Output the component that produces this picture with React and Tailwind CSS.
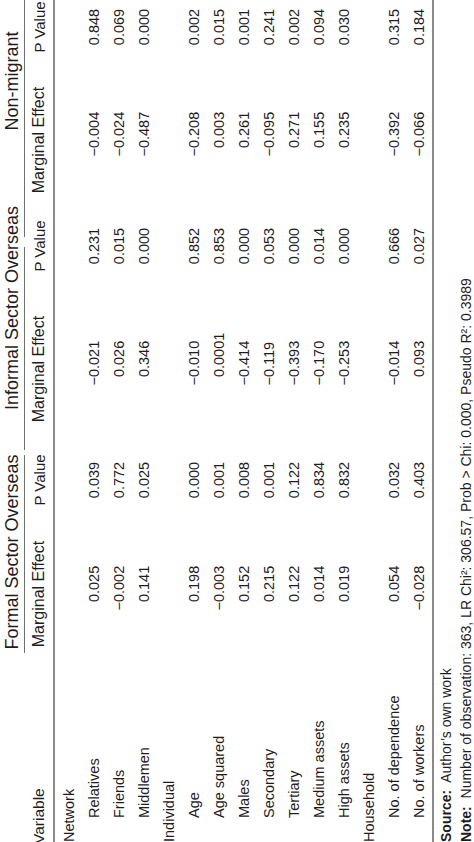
const rows = [
  { label: "Network", group: true },
  { label: "Relatives", v: ["0.025", "0.039", "−0.021", "0.231", "−0.004", "0.848"] },
  { label: "Friends", v: ["−0.002", "0.772", "0.026", "0.015", "−0.024", "0.069"] },
  { label: "Middlemen", v: ["0.141", "0.025", "0.346", "0.000", "−0.487", "0.000"] },
  { label: "Individual", group: true },
  { label: "Age", v: ["0.198", "0.000", "−0.010", "0.852", "−0.208", "0.002"] },
  { label: "Age squared", v: ["−0.003", "0.001", "0.0001", "0.853", "0.003", "0.015"] },
  { label: "Males", v: ["0.152", "0.008", "−0.414", "0.000", "0.261", "0.001"] },
  { label: "Secondary", v: ["0.215", "0.001", "−0.119", "0.053", "−0.095", "0.241"] },
  { label: "Tertiary", v: ["0.122", "0.122", "−0.393", "0.000", "0.271", "0.002"] },
  { label: "Medium assets", v: ["0.014", "0.834", "−0.170", "0.014", "0.155", "0.094"] },
  { label: "High assets", v: ["0.019", "0.832", "−0.253", "0.000", "0.235", "0.030"] },
  { label: "Household", group: true },
  { label: "No. of dependence", v: ["0.054", "0.032", "−0.014", "0.666", "−0.392", "0.315"] },
  { label: "No. of workers", v: ["−0.028", "0.403", "0.093", "0.027", "−0.066", "0.184"] },
];

// data columns: marginal effect / p value, centred on the measured positions
const cols = [
  { w: "w-[120px]", me: true },
  { w: "w-[108px]" },
  { w: "w-[114px]", me: true },
  { w: "w-[132px]" },
  { w: "w-[80px]", me: true },
  { w: "w-[146px]" },
];

function Decimal({ value }) {
  const [whole, frac] = value.split(".");
  return (
    <span className="flex">
      <span className="w-[40px] text-right">{whole}</span>
      <span className="w-[40px]">.{frac}</span>
    </span>
  );
}

export default function App() {
  return (
    <div className="h-[842px] w-[474px] overflow-hidden bg-white">
      <div className="h-[474px] w-[842px] origin-top-left translate-y-[842px] -rotate-90 font-['Liberation_Sans',Arial,sans-serif] text-[14.5px] leading-none text-[#1f1c1d]">
        {/* group headings */}
        <div className="flex h-[24px] items-center text-[18px]">
          <div className="w-[188px] shrink-0" />
          <div className="flex w-[204px] shrink-0 justify-center whitespace-nowrap">Formal Sector Overseas</div>
          <div className="flex w-[284px] shrink-0 justify-center whitespace-nowrap">Informal Sector Overseas</div>
          <div className="flex w-[170px] shrink-0 justify-center whitespace-nowrap">Non-migrant</div>
        </div>
        <div className="flex h-px">
          <div className="ml-[189px] w-[218px] bg-[#6f6f6f]" />
          <div className="ml-[5px] w-[223px] bg-[#6f6f6f]" />
          <div className="ml-[10px] w-[260px] bg-[#6f6f6f]" />
        </div>

        {/* column headings */}
        <div className="flex h-[28px] items-center">
          <div className="-ml-[2px] w-[190px] shrink-0 text-[15.5px]">Variable</div>
          {cols.map((c, i) => (
            <div key={i} className={`${c.w} flex shrink-0 justify-center whitespace-nowrap`}>
              {c.me ? <span className="text-[16px]">Marginal Effect</span> : <span className="text-[15px]">P Value</span>}
            </div>
          ))}
        </div>
        <div className="h-[2px] w-[900px] bg-[#8a8a8a]" />

        <div className="pt-[2px]">
          {rows.map((r) => (
            <div key={r.label} className="flex h-[25px] items-center">
              <div className={`w-[188px] shrink-0 whitespace-nowrap ${r.group ? "" : "pl-[24px]"}`}>{r.label}</div>
              {r.v &&
                r.v.map((val, i) => (
                  <div key={i} className={`${cols[i].w} flex shrink-0 justify-center`}>
                    {cols[i].me ? <Decimal value={val} /> : val}
                  </div>
                ))}
            </div>
          ))}
        </div>
        <div className="h-[2px] w-[900px] bg-[#8a8a8a]" />

        <div className="pt-[2px] text-[14px]">
          <p className="flex h-[20px] items-center whitespace-nowrap">
            <b className="font-bold">Source:</b>&nbsp; Author’s own work
          </p>
          <p className="flex h-[20px] items-center whitespace-nowrap">
            <b className="font-bold">Note:</b>&nbsp; Number of observation: 363, LR Chi²: 306.57, Prob &gt; Chi: 0.000,
            Pseudo R²: 0.3989
          </p>
        </div>
      </div>
    </div>
  );
}
